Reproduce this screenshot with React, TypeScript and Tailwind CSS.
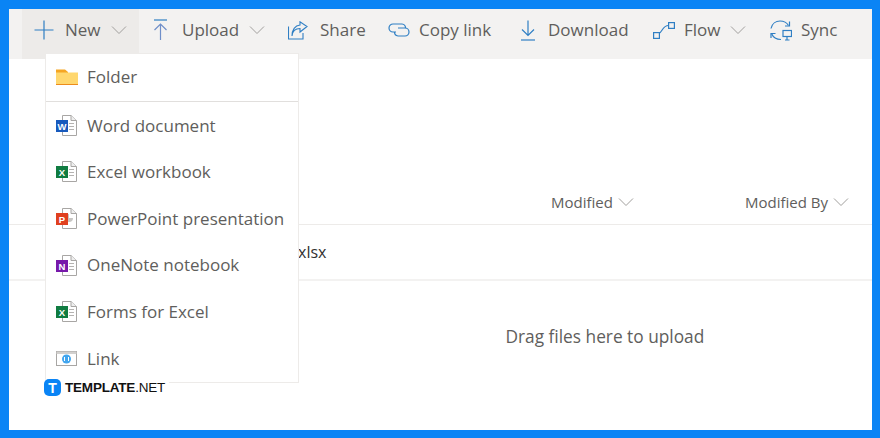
import React from "react";

function Chevron({ w = 16 }: { w?: number }) {
  return (
    <svg width={w} height={10} viewBox="0 0 16 10" fill="none" stroke="#a19f9d" strokeWidth="1">
      <path d="M1 1.5 L8 8.5 L15 1.5" />
    </svg>
  );
}

function Plus() {
  return (
    <svg width="20" height="20" viewBox="0 0 20 20" fill="none" stroke="#2f7fc4" strokeWidth="1.2">
      <path d="M10 0.5V19.5M0.5 10H19.5" />
    </svg>
  );
}
function UploadI() {
  return (
    <svg width="15" height="22" viewBox="0 0 15 22" fill="none" strokeWidth="1.2">
      <path d="M1 1H14" stroke="#2f7fc4" />
      <path d="M7.5 21V5M1.5 11L7.5 5L13.5 11" stroke="#6f8fc9" />
    </svg>
  );
}
function ShareI() {
  return (
    <svg width="20" height="19" viewBox="0 0 20 19" fill="none" stroke="#2f7fc4" strokeWidth="1.1">
      <path d="M0.5 5.5V18H15V12" />
      <path d="M4 15C4.5 10 8 7.5 12 7.5V11L19 5.5L12 0.8V4C7 4.5 4 9 4 15Z" />
    </svg>
  );
}
function LinkI() {
  return (
    <svg width="22" height="14" viewBox="0 0 22 14" fill="none" stroke="#2f7fc4" strokeWidth="1.2">
      <path d="M14 1H5A4 4 0 0 0 5 9H8" />
      <path d="M14 1A4 4 0 0 1 17.5 5" />
      <path d="M10 5H17A4 4 0 0 1 17 13H10A4 4 0 0 1 6.5 9" />
    </svg>
  );
}
function DownloadI() {
  return (
    <svg width="14" height="21" viewBox="0 0 14 21" fill="none" stroke="#2f7fc4" strokeWidth="1.2">
      <path d="M7 0.5V15.5M1 9.5L7 15.5L13 9.5" />
      <path d="M0 20H14" />
    </svg>
  );
}
function FlowI() {
  return (
    <svg width="22" height="17" viewBox="0 0 22 17" fill="none" stroke="#2f7fc4" strokeWidth="1.2">
      <rect x="0.6" y="10.6" width="5.8" height="5.8" />
      <rect x="15.6" y="0.6" width="5.8" height="5.8" />
      <path d="M6.5 11C9 10 10 3.5 15.5 3.5" />
    </svg>
  );
}
function SyncI() {
  return (
    <svg width="22" height="21" viewBox="0 0 22 21" fill="none" stroke="#2f7fc4" strokeWidth="1.2">
      <path d="M1 8.5C2 3.5 6 1 10 1C14 1 17 3 18.5 5.5" />
      <path d="M19.5 1.5V6H15" />
      <path d="M1 18V13.5H5.5" />
      <path d="M1.5 13.5C3 17 6 19.5 11 19.5" />
      <rect x="13" y="10.5" width="8.5" height="6" />
      <path d="M17 17V20M15 20H19.5" />
    </svg>
  );
}

function Btn({ icon, label, chevron, cls, gap, active }: { icon: React.ReactNode; label: string; chevron?: boolean; cls: string; gap: string; active?: boolean }) {
  return (
    <div className={`flex h-full shrink-0 items-center pb-[8px] ${cls} ${active ? "bg-[#edebe9]" : ""}`}>
      <div className={`flex items-center ${gap}`}>
        {icon}
        <span className="text-[#605e5c]">{label}</span>
      </div>
      {chevron ? <div className="ml-[10px] flex"><Chevron /></div> : null}
    </div>
  );
}

function DocIcon({ bg, letter, kind = "lines" }: { bg: string; letter: string; kind?: "lines" | "pie" }) {
  return (
    <svg width="21" height="21" viewBox="0 0 21 21">
      <path d="M6.5 0.5H15L20.5 5.5V20.5H6.5Z" fill="#fff" stroke="#a8a6a4" strokeWidth="1" />
      <path d="M15 0.5V5.5H20.5" fill="#eee" stroke="#a8a6a4" strokeWidth="1" />
      {kind === "lines" ? (
        <path d="M13 8.5H18M13 11.5H18M13 14.5H18" stroke="#b5b3b1" strokeWidth="1" />
      ) : (
        <path d="M13 6A4 4 0 1 0 17 10H13Z" fill="#c8c6c4" />
      )}
      <rect x="0" y="5" width="12" height="12" fill={bg} />
      <text x="6" y="14.5" textAnchor="middle" fontSize="9.5" fontWeight="700" fill="#fff" fontFamily="'Liberation Sans', sans-serif">{letter}</text>
    </svg>
  );
}

function FolderIcon() {
  return (
    <svg width="22" height="16" viewBox="0 0 22 16">
      <path d="M0 0.5H9L12 3V5H0Z" fill="#f5a623" />
      <path d="M0 3.5H22V16H0Z" fill="#ffd76e" />
      <path d="M0 15H22V16H0Z" fill="#ec8c1c" />
    </svg>
  );
}

function LinkDocIcon() {
  return (
    <svg width="21" height="15" viewBox="0 0 21 15">
      <rect x="0.5" y="0.5" width="20" height="14" fill="#fff" stroke="#a8a6a4" />
      <rect x="0.5" y="0.5" width="20" height="2.5" fill="#d2d0ce" />
      <circle cx="10.5" cy="8" r="4.5" fill="#41a5ee" />
      <path d="M8.5 6V10M12.5 6V10" stroke="#fff" strokeWidth="1" />
    </svg>
  );
}

function MenuItem({ icon, label }: { icon: React.ReactNode; label: string }) {
  return (
    <div className="flex h-[46.6px] items-center">
      <div className="flex w-[41px] justify-center">{icon}</div>
      <span className="text-[#605e5c]">{label}</span>
    </div>
  );
}

export default function App() {
  return (
    <div
      className="relative h-[438px] w-[880px] overflow-hidden border-t-[9px] border-r-[8px] border-b-[8px] border-l-[9px] border-[#0a84f5] bg-white text-[17px]"
      style={{ fontFamily: "'Open Sans', 'Noto Sans', sans-serif" }}
    >
      <div className="flex h-[50px] items-center bg-[#f3f2f1] pl-[13px]">
        <Btn cls="w-[117px] pl-[12px]" gap="gap-[11px]" active icon={<Plus />} label="New" chevron />
        <Btn cls="w-[142px] pl-[14px]" gap="gap-[14px]" icon={<UploadI />} label="Upload" chevron />
        <Btn cls="w-[98px] pl-[7px]" gap="gap-[12px]" icon={<ShareI />} label="Share" />
        <Btn cls="w-[129px] pl-[9px]" gap="gap-[9px]" icon={<LinkI />} label="Copy link" />
        <Btn cls="w-[130px] pl-[13px]" gap="gap-[13px]" icon={<DownloadI />} label="Download" />
        <Btn cls="w-[120px] pl-[15px]" gap="gap-[9px]" icon={<FlowI />} label="Flow" chevron />
        <Btn cls="w-[86px] pl-[12px]" gap="gap-[9px]" icon={<SyncI />} label="Sync" />
      </div>

      <div className="flex h-[166px] items-end justify-end border-b border-[#edebe9] pb-[11px] text-[15px] text-[#605e5c]">
        <div className="flex items-center gap-[5px]">
          <span>Modified</span>
          <Chevron />
        </div>
        <div className="mr-[23px] ml-[111px] flex items-center gap-[5px]">
          <span>Modified By</span>
          <Chevron />
        </div>
      </div>

      <div className="flex h-[56px] items-center border-b-2 border-[#f3f2f1] pl-[289px] text-[#323130]">
        <span className="text-[16px]">xlsx</span>
      </div>

      <div className="flex justify-center pt-[43px] pl-[330px]">
        <span className="w-[200px] whitespace-nowrap text-[17.3px] text-[#605e5c]">Drag files here to upload</span>
      </div>

      <div className="absolute top-[44px] left-[36px] w-[254px] border border-[#edebe9] bg-white">
        <div className="flex h-[47px] items-center pb-[1px]">
          <div className="flex w-[41px] justify-center"><FolderIcon /></div>
          <span className="text-[#605e5c]">Folder</span>
        </div>
        <div className="h-px bg-[#e1dfdd]" />
        <MenuItem icon={<DocIcon bg="#185abd" letter="W" />} label="Word document" />
        <MenuItem icon={<DocIcon bg="#107c41" letter="X" />} label="Excel workbook" />
        <MenuItem icon={<DocIcon bg="#e0401f" letter="P" kind="pie" />} label="PowerPoint presentation" />
        <MenuItem icon={<DocIcon bg="#7719aa" letter="N" />} label="OneNote notebook" />
        <MenuItem icon={<DocIcon bg="#107c41" letter="X" />} label="Forms for Excel" />
        <MenuItem icon={<LinkDocIcon />} label="Link" />
      </div>

      <div className="absolute top-[370px] left-[35px] flex items-center gap-[4px] rounded-sm bg-white pr-[4px] text-[#111]">
        <div className="flex h-[17px] w-[17px] items-center justify-center rounded-[5px] bg-[#0a84f5] text-[14px] leading-none font-bold text-white" style={{ fontFamily: "'Liberation Sans', sans-serif" }}>T</div>
        <span className="text-[13.5px] leading-none tracking-[-0.2px]" style={{ fontFamily: "'Liberation Sans', sans-serif" }}>
          <span className="font-bold">TEMPLATE</span>.NET
        </span>
      </div>
    </div>
  );
}
